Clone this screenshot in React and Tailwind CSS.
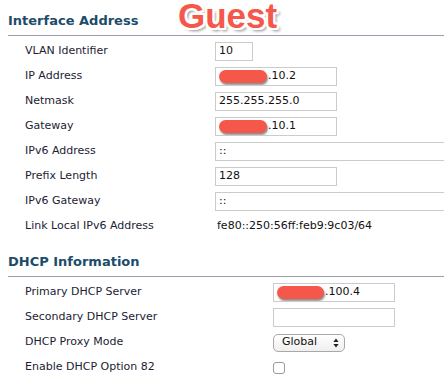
import React from "react";

const font = "font-['DejaVu_Sans','Verdana',sans-serif]";

function Blob({ w = 48 }) {
  return (
    <span
      className="inline-block h-[13px] rounded-full bg-[#f5574b] shadow-[1px_2px_2px_rgba(0,0,0,0.45)] mr-px"
      style={{ width: w }}
    />
  );
}

function Field({ w, children }) {
  return (
    <div
      className="h-[19px] border border-[#cbcbcb] bg-white flex items-center pl-[3px] text-[11px] text-[#111] whitespace-nowrap overflow-hidden shrink-0"
      style={{ width: w }}
    >
      {children}
    </div>
  );
}

function Row({ label, labelW, children }) {
  return (
    <div className="flex items-center h-[25px]">
      <div
        className="pl-[17px] text-[11px] text-[#1c1c34] shrink-0 whitespace-nowrap"
        style={{ width: labelW }}
      >
        {label}
      </div>
      {children}
    </div>
  );
}

function Heading({ children, className = "" }) {
  return (
    <div
      className={
        "text-[13px] leading-4 font-bold text-[#1d4c6b] pb-[6px] border-b border-[#9b9cab] " +
        className
      }
    >
      {children}
    </div>
  );
}

export default function App() {
  return (
    <div className={`relative w-[444px] h-[385px] bg-white overflow-hidden ${font}`}>
      <div className="pl-2">
        <Heading className="pt-[13px]">Interface Address</Heading>
        <div className="pt-[3px]">
          <Row label="VLAN Identifier" labelW={207}>
            <Field w={38}>10</Field>
          </Row>
          <Row label="IP Address" labelW={207}>
            <Field w={122}>
              <Blob w={48} />.10.2
            </Field>
          </Row>
          <Row label="Netmask" labelW={207}>
            <Field w={122}>255.255.255.0</Field>
          </Row>
          <Row label="Gateway" labelW={207}>
            <Field w={122}>
              <Blob w={48} />.10.1
            </Field>
          </Row>
          <Row label="IPv6 Address" labelW={207}>
            <Field w={260}>::</Field>
          </Row>
          <Row label="Prefix Length" labelW={207}>
            <Field w={122}>128</Field>
          </Row>
          <Row label="IPv6 Gateway" labelW={207}>
            <Field w={260}>::</Field>
          </Row>
          <Row label="Link Local IPv6 Address" labelW={209}>
            <span className="text-[11px] text-[#111] whitespace-nowrap">
              fe80::250:56ff:feb9:9c03/64
            </span>
          </Row>
        </div>

        <Heading className="mt-[15px]">DHCP Information</Heading>
        <div className="pt-[3px]">
          <Row label="Primary DHCP Server" labelW={265}>
            <Field w={122}>
              <Blob w={47} />.100.4
            </Field>
          </Row>
          <Row label="Secondary DHCP Server" labelW={265}>
            <Field w={122}></Field>
          </Row>
          <Row label="DHCP Proxy Mode" labelW={265}>
            <div className="h-[18px] w-[72px] rounded-[5px] border border-[#a8a8a8] bg-gradient-to-b from-white to-[#efefef] flex items-center justify-between pl-[8px] pr-[5px] text-[11px] text-[#111]">
              <span>Global</span>
              <svg width="6" height="10" viewBox="0 0 6 10">
                <path d="M3 0.5 L5.6 4 H0.4 Z" fill="#222" />
                <path d="M3 9.5 L5.6 6 H0.4 Z" fill="#222" />
              </svg>
            </div>
          </Row>
          <Row label="Enable DHCP Option 82" labelW={265}>
            <div className="w-[12px] h-[12px] rounded-[3px] border border-[#9a9a9a] bg-white" />
          </Row>
        </div>
      </div>

      <div
        className="absolute left-[178px] top-0 font-['Liberation_Sans',Arial,sans-serif] font-bold text-[35px] leading-[31px] text-[#f5574b] [text-shadow:2px_0_0_#fff,-2px_0_0_#fff,0_2px_0_#fff,0_-2px_0_#fff,2px_2px_0_#fff,-2px_-2px_0_#fff,2px_-2px_0_#fff,-2px_2px_0_#fff,3px_3px_3px_rgba(0,0,0,0.45)]"
      >
        Guest
      </div>
    </div>
  );
}
